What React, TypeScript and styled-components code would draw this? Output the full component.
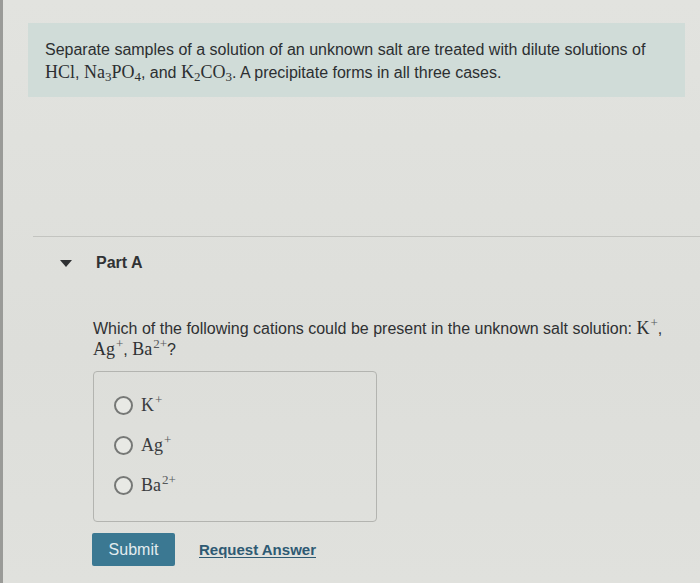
import React from 'react'
import styled, {createGlobalStyle} from 'styled-components'

const GlobalStyle = createGlobalStyle`
  html, body {
    margin: 0;
    padding: 0;
    background: #dfe0dc;
  }
  body {
    font-family: "Liberation Sans", Arial, sans-serif;
    color: #2f3133;
  }
`

const Page = styled.div`
  min-height: 583px;
  border-left: 3px solid #9a9b98;
  box-sizing: border-box;
  padding-top: 23px;
  background: linear-gradient(180deg, #e2e3df 0%, #dddeda 60%, #e0e1dd 100%);
`

const Intro = styled.div`
  margin: 0 15px 0 25px;
  padding: 16px 17px 13px;
  background: #d0dcd8;
  font-size: 16px;
  line-height: 22px;
  color: #2c2f31;
`

const Chem = styled.span`
  font-family: "Liberation Serif", "Times New Roman", serif;
  font-size: 18px;
`

const Sub = styled.sub`
  font-size: 13px;
  vertical-align: -3px;
  line-height: 0;
`

const Sup = styled.sup`
  font-size: 13px;
  vertical-align: 7px;
  line-height: 0;
  margin-left: 1px;
  color: #55585a;
`

const Section = styled.div`
  margin-top: 139px;
  margin-left: 30px;
  border-top: 1px solid #c3c4c0;
`

const Header = styled.div`
  display: flex;
  align-items: center;
  gap: 24px;
  padding: 11px 0 0 27px;
  height: 30px;
`

const Caret = styled.span`
  width: 0;
  height: 0;
  border-left: 6px solid transparent;
  border-right: 6px solid transparent;
  border-top: 7px solid #2f3133;
`

const PartTitle = styled.div`
  font-size: 16px;
  font-weight: bold;
  color: #303234;
`

const Body = styled.div`
  padding: 40px 20px 0 60px;
`

const Question = styled.div`
  font-size: 16px;
  line-height: 20px;
  color: #2f3133;
`

const Options = styled.div`
  margin-top: 11px;
  width: 284px;
  height: 151px;
  box-sizing: border-box;
  border: 1px solid #b3b4b0;
  border-radius: 4px;
  padding: 24px 0 0 20px;
  display: flex;
  flex-direction: column;
  gap: 21px;
`

const Option = styled.label`
  display: flex;
  align-items: center;
  gap: 8px;
  height: 19px;
  font-family: "Liberation Serif", "Times New Roman", serif;
  font-size: 18px;
  color: #3a3c3e;
`

const Radio = styled.span`
  width: 15px;
  height: 15px;
  border: 2px solid #767876;
  border-radius: 50%;
  background: #e8e9e5;
`

const Actions = styled.div`
  margin-top: 11px;
  display: flex;
  align-items: center;
  gap: 24px;
`

const SubmitButton = styled.button`
  width: 83px;
  height: 33px;
  margin-left: -1px;
  border: none;
  border-radius: 2px;
  background: #3b7892;
  color: #e3ecef;
  font-family: "Liberation Sans", Arial, sans-serif;
  font-size: 16px;
`

const RequestLink = styled.a`
  font-size: 15px;
  font-weight: bold;
  color: #2e5a73;
  text-decoration: underline;
  text-underline-offset: 2px;
`

const options = [
  {base: 'K', charge: '+'},
  {base: 'Ag', charge: '+'},
  {base: 'Ba', charge: '2+'},
]

export default function App() {
  return (
    <>
      <GlobalStyle />
      <Page>
        <Intro>
          Separate samples of a solution of an unknown salt are treated with dilute solutions of
          <br />
          <Chem>HCl</Chem>, <Chem>Na<Sub>3</Sub>PO<Sub>4</Sub></Chem>, and{' '}
          <Chem>K<Sub>2</Sub>CO<Sub>3</Sub></Chem>. A precipitate forms in all three cases.
        </Intro>
        <Section>
          <Header>
            <Caret />
            <PartTitle>Part A</PartTitle>
          </Header>
          <Body>
            <Question>
              Which of the following cations could be present in the unknown salt solution:{' '}
              <Chem>K<Sup>+</Sup></Chem>,
              <br />
              <Chem>Ag<Sup>+</Sup></Chem>, <Chem>Ba<Sup>2+</Sup></Chem>?
            </Question>
            <Options>
              {options.map(o => (
                <Option key={o.base}>
                  <Radio />
                  <span>
                    {o.base}
                    <Sup>{o.charge}</Sup>
                  </span>
                </Option>
              ))}
            </Options>
            <Actions>
              <SubmitButton>Submit</SubmitButton>
              <RequestLink href="#">Request Answer</RequestLink>
            </Actions>
          </Body>
        </Section>
      </Page>
    </>
  )
}
